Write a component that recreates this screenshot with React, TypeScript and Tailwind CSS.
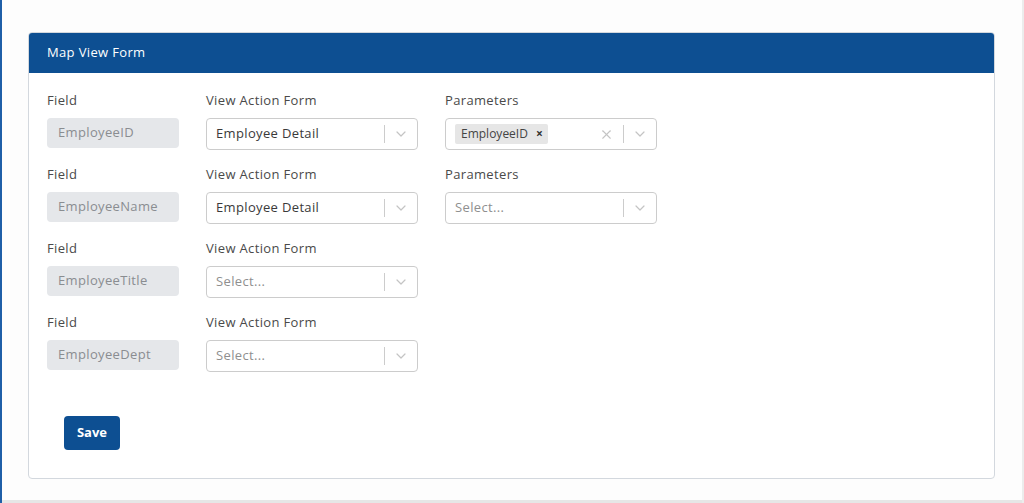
import { ChevronDown, X } from 'lucide-react';

interface Row {
    field: string;
    form?: string;
    params?: 'chip' | 'empty';
}

const rows: Row[] = [
    { field: 'EmployeeID', form: 'Employee Detail', params: 'chip' },
    { field: 'EmployeeName', form: 'Employee Detail', params: 'empty' },
    { field: 'EmployeeTitle' },
    { field: 'EmployeeDept' },
];

function SelectBox({ children, clearable }: { children: React.ReactNode; clearable?: boolean }) {
    return (
        <div className="w-[212px] h-[32px] border border-[#cccccc] rounded-[4px] bg-white flex items-center">
            <div className="flex-1 flex items-center pl-[9px] min-w-0">{children}</div>
            {clearable && <X className="w-[15px] h-[15px] text-[#c4c4c4] mr-[9px]" strokeWidth={1.8} />}
            <span className="w-px h-[18px] bg-[#cccccc]"></span>
            <ChevronDown className="w-[16px] h-[16px] text-[#c4c4c4] mx-[8px]" strokeWidth={1.8} />
        </div>
    );
}

export default function App() {
    return (
        <div className="w-[1024px] h-[503px] flex bg-[#fdfdfd] text-[13px] tracking-[0.35px] font-['Open_Sans',sans-serif] overflow-hidden">
            <div className="w-[2px] bg-[#1f5fa8]"></div>
            <div className="flex-1 flex flex-col">
                <div className="flex-1 pl-[26px] pt-[32px]">
                    <div className="w-[967px] h-[447px] border border-[#d3d8de] rounded-[4px] bg-white overflow-hidden flex flex-col">
                        {/* header */}
                        <div className="h-[40px] bg-[#0d4f92] flex items-center px-[18px] text-white text-[13px]">
                            Map View Form
                        </div>

                        <div className="pl-[18px] pt-[18px] flex flex-col gap-[15px]">
                            {rows.map((row) => (
                                <div key={row.field} className="flex gap-[27px]">
                                    <div className="flex flex-col gap-[9px]">
                                        <label className="h-[18px] leading-[18px] text-[#4a4a4a]">Field</label>
                                        <div className="w-[132px] h-[30px] rounded-[4px] bg-[#e5e7ea] text-[#8a8d91] flex items-center pl-[11px]">
                                            {row.field}
                                        </div>
                                    </div>
                                    <div className="flex flex-col gap-[9px]">
                                        <label className="h-[18px] leading-[18px] text-[#4a4a4a]">View Action Form</label>
                                        <SelectBox>
                                            {row.form ? (
                                                <span className="text-[#3a3a3a]">{row.form}</span>
                                            ) : (
                                                <span className="text-[#8f8f8f]">Select...</span>
                                            )}
                                        </SelectBox>
                                    </div>
                                    {row.params && (
                                        <div className="flex flex-col gap-[9px]">
                                            <label className="h-[18px] leading-[18px] text-[#4a4a4a]">Parameters</label>
                                            {row.params === 'chip' ? (
                                                <SelectBox clearable>
                                                    <span className="h-[20px] bg-[#e6e6e6] rounded-[2px] flex items-center pl-[6px] pr-[5px] text-[12px] tracking-normal text-[#444444] gap-[8px]">
                                                        EmployeeID
                                                        <span className="text-[12px] font-bold text-[#333333] leading-none">×</span>
                                                    </span>
                                                </SelectBox>
                                            ) : (
                                                <SelectBox>
                                                    <span className="text-[#8f8f8f]">Select...</span>
                                                </SelectBox>
                                            )}
                                        </div>
                                    )}
                                </div>
                            ))}
                        </div>

                        <div className="pl-[35px] pt-[44px]">
                            <button className="w-[56px] h-[34px] rounded-[4px] bg-[#0d4f92] text-white font-bold text-[13px] tracking-normal">
                                Save
                            </button>
                        </div>
                    </div>
                </div>
                <div className="h-[3px] bg-[#e6e6e6]"></div>
            </div>
            <div className="w-[2px] bg-[#ececec]"></div>
        </div>
    );
}
